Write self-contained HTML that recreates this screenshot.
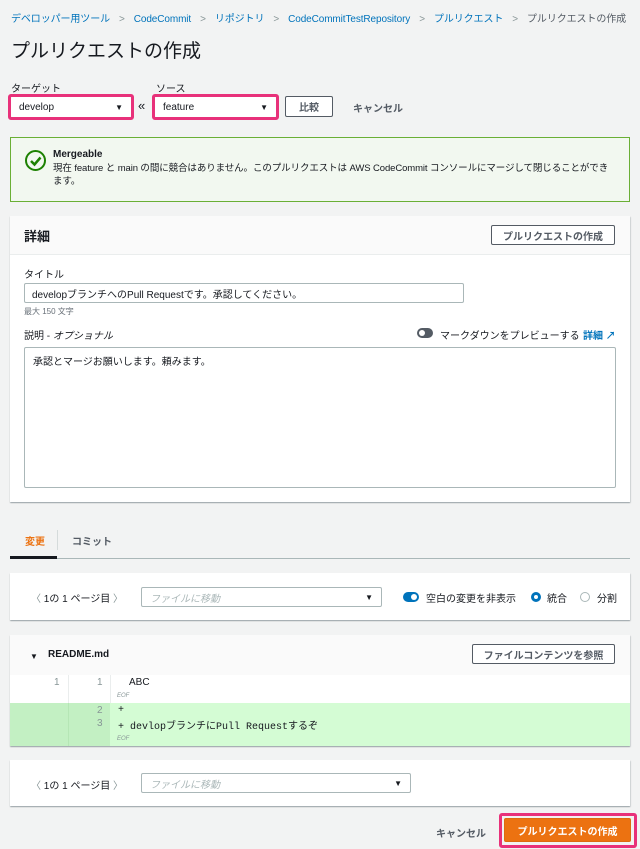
<!DOCTYPE html>
<html><head><meta charset="utf-8"><style>
*{box-sizing:border-box;margin:0;padding:0}
body{width:640px;height:849px;background:#f2f3f3;font-family:"Liberation Sans","Noto Sans CJK JP",sans-serif;color:#16191f;position:relative;overflow:hidden;font-size:10px}
.a{position:absolute}
.lnk{color:#0073bb}
.sel{position:absolute;background:#fff;border:1px solid #aab7b8;border-radius:2px;font-size:10px;padding:0 8px;display:flex;align-items:center;justify-content:space-between}
.pink{position:absolute;border:3px solid #e8317a;border-radius:3px}
.btn{position:absolute;background:#fff;border:1px solid #545b64;border-radius:2px;font-size:10px;font-weight:bold;color:#545b64;display:flex;align-items:center;justify-content:center}
.panel{position:absolute;background:#fff;box-shadow:0 1px 1px rgba(0,28,36,.3),1px 1px 1px rgba(0,28,36,.1)}
.tri{font-size:8px;color:#16191f}
.ph{color:#aab7b8;font-style:italic}
.tog{position:absolute;width:16px;height:10px;border-radius:5px}
.tog i{position:absolute;top:2px;width:6px;height:6px;border-radius:50%;background:#fff}
.mono{font-family:"Liberation Mono","Noto Sans CJK JP",monospace}
.sep{color:#879596;margin:0 9px}
</style></head><body>
<div class="a" style="left:11px;top:10px;font-size:10px;white-space:nowrap;letter-spacing:-0.1px"><span class="lnk">デベロッパー用ツール</span><span class="sep">&gt;</span><span class="lnk">CodeCommit</span><span class="sep">&gt;</span><span class="lnk">リポジトリ</span><span class="sep">&gt;</span><span class="lnk">CodeCommitTestRepository</span><span class="sep">&gt;</span><span class="lnk">プルリクエスト</span><span class="sep">&gt;</span><span style="color:#545b64">プルリクエストの作成</span></div>
<div class="a" style="left:11px;top:36px;font-size:19px">プルリクエストの作成</div>
<div class="a" style="left:11px;top:80px;font-size:10px">ターゲット</div>
<div class="a" style="left:156px;top:80px;font-size:10px">ソース</div>
<div class="pink" style="left:8px;top:94px;width:126px;height:26px"></div>
<div class="sel" style="left:11px;top:97px;width:120px;height:20px;border:none">develop<span class="tri">▼</span></div>
<div class="a" style="left:138px;top:98px;font-size:13px">«</div>
<div class="pink" style="left:152px;top:94px;width:127px;height:26px"></div>
<div class="sel" style="left:155px;top:97px;width:121px;height:20px;border:none">feature<span class="tri">▼</span></div>
<div class="btn" style="left:285px;top:96px;width:48px;height:21px">比較</div>
<div class="a" style="left:353px;top:100px;font-weight:bold;color:#545b64">キャンセル</div>

<div class="a" style="left:10px;top:137px;width:620px;height:65px;background:#f2f8f0;border:1px solid #6aaf35"></div>
<div class="a" style="left:25px;top:150px;width:21px;height:21px;border:2.5px solid #1d8102;border-radius:50%"></div>
<svg class="a" style="left:25px;top:150px" width="21" height="21"><path d="M6 11 L9.5 14.5 L15.5 7.5" stroke="#1d8102" stroke-width="2.5" fill="none"/></svg>
<div class="a" style="left:53px;top:149px;font-weight:bold;font-size:10px">Mergeable</div>
<div class="a" style="left:53px;top:162px;width:562px;font-size:9.5px;line-height:13px;letter-spacing:-0.1px">現在 feature と main の間に競合はありません。このプルリクエストは AWS CodeCommit コンソールにマージして閉じることができます。</div>

<div class="panel" style="left:10px;top:216px;width:620px;height:286px"></div>
<div class="a" style="left:10px;top:216px;width:620px;height:39px;background:#fafafa;border-bottom:1px solid #eaeded"></div>
<div class="a" style="left:24px;top:226px;font-size:13px;font-weight:bold">詳細</div>
<div class="btn" style="left:491px;top:225px;width:124px;height:20px">プルリクエストの作成</div>
<div class="a" style="left:24px;top:266px">タイトル</div>
<div class="sel" style="left:24px;top:283px;width:440px;height:20px;justify-content:flex-start;padding-left:7px">developブランチへのPull Requestです。承認してください。</div>
<div class="a" style="left:24px;top:306px;font-size:8px;color:#687078">最大 150 文字</div>
<div class="a" style="left:24px;top:327px;color:#16191f">説明 - <i>オプショナル</i></div>
<div class="tog" style="left:417px;top:328px;background:#545b64"><i style="left:2px"></i></div>
<div class="a" style="left:440px;top:327px">マークダウンをプレビューする</div>
<div class="a lnk" style="left:583px;top:327px;font-weight:bold">詳細 ↗</div>
<div class="sel" style="left:24px;top:347px;width:592px;height:141px;align-items:flex-start;padding-top:5px;justify-content:flex-start">承認とマージお願いします。頼みます。</div>

<div class="a" style="left:25px;top:533px;color:#ec7211;font-weight:bold">変更</div>
<div class="a" style="left:57px;top:530px;width:1px;height:20px;background:#d5dbdb"></div>
<div class="a" style="left:72px;top:533px;font-weight:bold;color:#545b64">コミット</div>
<div class="a" style="left:10px;top:558px;width:620px;height:1px;background:#aab7b8"></div>
<div class="a" style="left:10px;top:556px;width:47px;height:3px;background:#16191f"></div>

<div class="panel" style="left:10px;top:573px;width:620px;height:47px"></div>
<div class="a" style="left:31px;top:590px;color:#16191f"><span style="color:#879596">〈</span> 1の 1 ページ目 <span style="color:#879596">〉</span></div>
<div class="sel" style="left:141px;top:587px;width:241px;height:20px"><span class="ph">ファイルに移動</span><span class="tri">▼</span></div>
<div class="tog" style="left:403px;top:592px;background:#0073bb"><i style="left:8px"></i></div>
<div class="a" style="left:426px;top:590px">空白の変更を非表示</div>
<div class="a" style="left:531px;top:592px;width:10px;height:10px;border-radius:50%;border:3px solid #0073bb"></div>
<div class="a" style="left:547px;top:590px">統合</div>
<div class="a" style="left:580px;top:592px;width:10px;height:10px;border-radius:50%;border:1px solid #aab7b8;background:#fff"></div>
<div class="a" style="left:597px;top:590px">分割</div>

<div class="panel" style="left:10px;top:635px;width:620px;height:111px"></div>
<div class="a" style="left:10px;top:635px;width:620px;height:40px;background:#fafafa"></div>
<div class="a tri" style="left:30px;top:652px">▼</div>
<div class="a" style="left:48px;top:649px;font-weight:bold">README.md</div>
<div class="btn" style="left:472px;top:644px;width:143px;height:20px">ファイルコンテンツを参照</div>
<div class="a" style="left:10px;top:675px;width:620px;height:28px;background:#fff"></div>
<div class="a" style="left:68px;top:675px;width:1px;height:28px;background:#eaeded"></div>
<div class="a" style="left:110px;top:675px;width:1px;height:28px;background:#eaeded"></div>
<div class="a" style="left:10px;top:703px;width:620px;height:43px;background:#d4fcd4"></div>
<div class="a" style="left:10px;top:703px;width:100px;height:43px;background:#c3f0c3"></div>
<div class="a" style="left:68px;top:703px;width:1px;height:43px;background:#b5e6b5"></div>
<div class="a" style="left:54px;top:677px;color:#879596">1</div>
<div class="a" style="left:97px;top:677px;color:#879596">1</div>
<div class="a" style="left:129px;top:677px">ABC</div>
<div class="a" style="left:117px;top:693px;font-size:6px;color:#879596;font-style:italic">EOF</div>
<div class="a" style="left:97px;top:705px;color:#879596">2</div>
<div class="a mono" style="left:118px;top:705px">+</div>
<div class="a" style="left:97px;top:718px;color:#879596">3</div>
<div class="a mono" style="left:118px;top:717px">+ devlopブランチにPull Requestするぞ</div>
<div class="a" style="left:117px;top:736px;font-size:6px;color:#879596;font-style:italic">EOF</div>

<div class="panel" style="left:10px;top:760px;width:620px;height:46px"></div>
<div class="a" style="left:31px;top:777px"><span style="color:#879596">〈</span> 1の 1 ページ目 <span style="color:#879596">〉</span></div>
<div class="sel" style="left:141px;top:773px;width:270px;height:20px"><span class="ph">ファイルに移動</span><span class="tri">▼</span></div>

<div class="a" style="left:436px;top:825px;font-weight:bold;color:#545b64">キャンセル</div>
<div class="pink" style="left:499px;top:813px;width:138px;height:35px"></div>
<div class="a" style="left:504px;top:818px;width:127px;height:24px;background:#ec7211;border:1px solid #dd6b10;border-radius:2px;color:#fff;font-weight:bold;display:flex;align-items:center;justify-content:center">プルリクエストの作成</div>
</body></html>
